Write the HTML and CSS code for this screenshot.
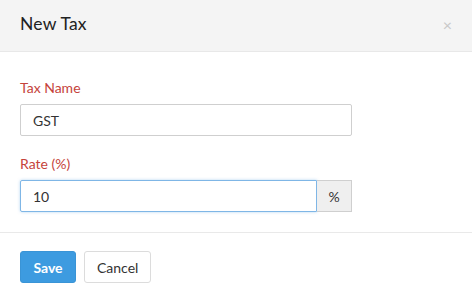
FILE: index.html
```html
<!DOCTYPE html>
<html>
<head>
<meta charset="utf-8">
<link rel="stylesheet" href="styles.css">
</head>
<body>
<div class="modal">
  <div class="modal-header">
    <span class="title">New Tax</span>
    <span class="close">&times;</span>
  </div>
  <div class="modal-body">
    <div class="field">
      <label class="label">Tax Name</label>
      <div class="input">GST</div>
    </div>
    <div class="field">
      <label class="label">Rate (%)</label>
      <div class="input-group">
        <div class="input focus">10</div>
        <div class="addon">%</div>
      </div>
    </div>
  </div>
  <div class="modal-footer">
    <button class="btn btn-primary">Save</button>
    <button class="btn btn-default">Cancel</button>
  </div>
</div>
</body>
</html>
```
FILE: styles.css
```css
html, body { margin: 0; padding: 0; background: #fff; }
body { font-family: "Lato", "Liberation Sans", sans-serif; color: #333; }
.modal { width: 472px; }
.modal-header {
  height: 52px;
  background: #f4f4f4;
  border-bottom: 1px solid #e8e8e8;
  display: flex;
  align-items: center;
  justify-content: space-between;
  padding: 0 20px;
  box-sizing: border-box;
}
.title { font-size: 17.5px; color: #222; margin-top: -4px; letter-spacing: 0.2px; }
.close { font-size: 16px; color: #c8c8c8; margin-right: 0; margin-top: -2px; }
.modal-body { padding: 27px 120px 20px 20px; border-bottom: 1px solid #e9e9e9; }
.field { display: flex; flex-direction: column; }
.field + .field { margin-top: 19px; }
.label { color: #c5433b; font-size: 14px; line-height: 18px; margin-bottom: 7px; }
.input {
  height: 32px;
  box-sizing: border-box;
  border: 1px solid #cfcfcf;
  border-radius: 2px;
  padding: 0 12px;
  display: flex;
  align-items: center;
  font-size: 14px;
  color: #333;
}
.input-group { display: flex; }
.input.focus { flex: 1; border-color: #7fb6e6; box-shadow: 0 0 3px rgba(100,170,230,.5); border-radius: 2px 0 0 2px; }
.addon {
  width: 35px;
  height: 32px;
  box-sizing: border-box;
  background: #efefef;
  border: 1px solid #cfcfcf;
  border-left: none;
  display: flex;
  align-items: center;
  justify-content: center;
  font-size: 14px;
  color: #333;
}
.modal-footer { padding: 18px 20px; display: flex; gap: 8px; }
.btn {
  height: 32px;
  box-sizing: border-box;
  border-radius: 3px;
  font-family: inherit;
  font-size: 14px;
  padding: 0 12px;
  cursor: pointer;
}
.btn-primary { background: #3d9be0; border: 1px solid #3a94d6; color: #fff; font-weight: bold; width: 56px; }
.btn-default { background: #fff; border: 1px solid #dcdcdc; color: #333; width: 67px; }
```
